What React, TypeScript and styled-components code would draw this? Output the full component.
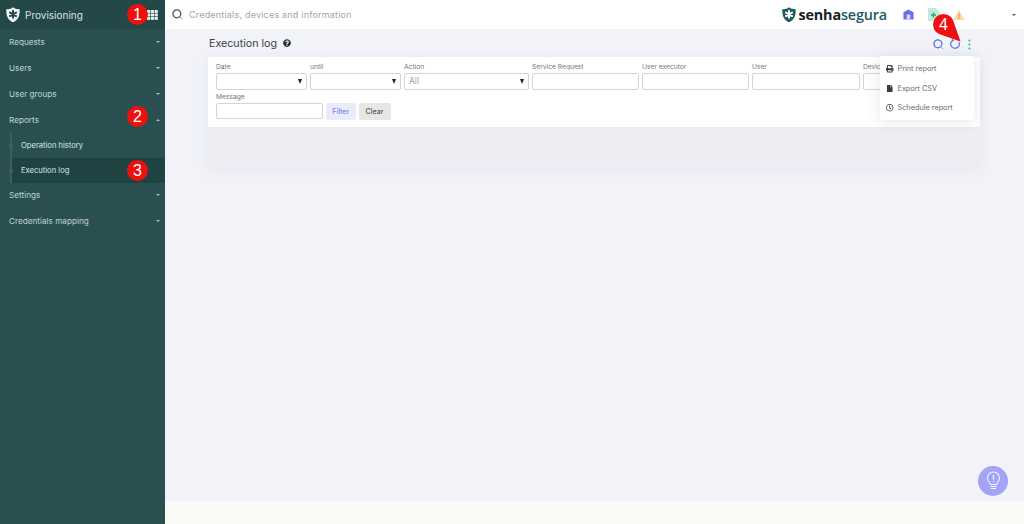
import React from "react";
import styled, { createGlobalStyle } from "styled-components";
import { FaPrint, FaFile, FaRegClock, FaQuestionCircle } from "react-icons/fa";

const Global = createGlobalStyle`
  html, body { margin: 0; padding: 0; height: 100%; overflow: hidden; }
  body { font-family: "Inter", "Open Sans", sans-serif; background: #f1f3f9; }
  #root { height: 524px; }
  * { box-sizing: border-box; }
`;

const Page = styled.div`
  display: flex;
  width: 1024px;
  height: 524px;
  overflow: hidden;
`;
const Sidebar = styled.aside`
  position: relative;
  width: 165px;
  flex: none;
  background: #2a4f50;
`;
const Brand = styled.div`
  height: 29px;
  background: #244747;
  display: flex;
  align-items: center;
  padding-left: 6px;
  color: #d9e4e2;
  font-size: 10px;
  gap: 5px;
`;
const GridIcon = styled.svg`
  margin-left: auto;
  margin-right: 7px;
`;
const Nav = styled.nav`
  display: flex;
  flex-direction: column;
`;
const NavItem = styled.div`
  height: 26px;
  display: flex;
  align-items: center;
  justify-content: space-between;
  padding: 0 5px 0 9px;
  color: #bdd3d2;
  font-size: 8.2px;
`;
const Caret = styled.span<{ $up?: boolean }>`
  width: 0;
  height: 0;
  border-left: 2.5px solid transparent;
  border-right: 2.5px solid transparent;
  ${(p) => (p.$up ? "border-bottom: 2.5px solid #a9c2c1;" : "border-top: 2.5px solid #a9c2c1;")}
`;
const SubList = styled.div`
  position: relative;
  display: flex;
  flex-direction: column;
  margin-bottom: -1px;
  &::before {
    content: "";
    position: absolute;
    left: 10px;
    top: 0;
    bottom: 0;
    width: 1.5px;
    background: #3c5e60;
  }
`;
const SubItem = styled.div<{ $active?: boolean }>`
  position: relative;
  height: 25px;
  display: flex;
  align-items: center;
  padding-left: 21px;
  color: #dbe6e4;
  font-size: 7.6px;
  background: ${(p) => (p.$active ? "linear-gradient(90deg, transparent 12px, #1f4343 12px)" : "transparent")};
  &::before {
    content: "";
    position: absolute;
    left: 9px;
    top: 10.5px;
    width: 4px;
    height: 4px;
    background: #46586a;
  }
`;
const Marker = styled.span<{ $x: number; $y: number }>`
  position: absolute;
  left: ${(p) => p.$x}px;
  top: ${(p) => p.$y}px;
  width: 21px;
  height: 21px;
  border-radius: 50%;
  background: #ee0f0f;
  color: #fff;
  font-family: "Liberation Sans", sans-serif;
  font-size: 16px;
  display: flex;
  align-items: center;
  justify-content: center;
  z-index: 5;
`;
const Tail = styled.svg`
  position: absolute;
  left: 0;
  top: 0;
  z-index: -1;
  overflow: visible;
`;
const Content = styled.div`
  flex: 1;
  display: flex;
  flex-direction: column;
  min-width: 0;
  position: relative;
`;
const TopBar = styled.header`
  height: 29px;
  background: #fff;
  display: flex;
  align-items: center;
  padding-left: 7px;
  flex: none;
`;
const SearchText = styled.span`
  margin-left: 6px;
  font-size: 9px;
  color: #a8a4a0;
  letter-spacing: 0.2px;
`;
const Logo = styled.div`
  margin-left: auto;
  display: flex;
  align-items: center;
  gap: 2px;
`;
const Wordmark = styled.span`
  font-family: "Open Sans", sans-serif;
  font-size: 14.4px;
  font-weight: 700;
  color: #15201f;
  letter-spacing: -0.15px;
  white-space: nowrap;
`;
const WordmarkTail = styled.span`
  color: #1e5a5e;
  font-weight: 600;
`;
const HeadIcons = styled.div`
  display: flex;
  align-items: center;
  margin-left: 16px;
  width: 62px;
`;
const IconSlot = styled.span`
  display: flex;
  width: 25px;
`;
const UserCaret = styled.span`
  margin: 0 8px 0 47px;
  width: 0;
  height: 0;
  border-left: 2.5px solid transparent;
  border-right: 2.5px solid transparent;
  border-top: 2.5px solid #555;
`;
const Main = styled.main`
  flex: 1;
  padding: 0 44px 0 43px;
  position: relative;
  min-height: 0;
`;
const TitleRow = styled.div`
  height: 28px;
  display: flex;
  align-items: center;
  gap: 6px;
  padding-left: 1px;
  color: #3b3f47;
  font-size: 10.7px;
  svg { color: #2b2f36; }
`;
const Actions = styled.div`
  margin-left: auto;
  display: flex;
  align-items: center;
  gap: 7px;
  margin-right: 9px;
  margin-top: 2px;
`;
const RefreshIcon = styled.svg`
  margin: 0 1px 0 -1px;
`;
const Panel = styled.section`
  box-shadow: 0 2px 12px rgba(60, 60, 90, 0.06);
`;
const FilterBox = styled.div`
  height: 70px;
  background: #fff;
  padding: 5px 8px 0;
  overflow: hidden;
`;
const FilterRow = styled.div`
  display: flex;
  gap: 3px;
  margin-bottom: 2px;
  align-items: flex-end;
`;
const Field = styled.label<{ $w: number }>`
  width: ${(p) => p.$w}px;
  flex: none;
  display: flex;
  flex-direction: column;
  gap: 1px;
  color: #77787c;
  font-size: 6.7px;
  line-height: 10px;
`;
const Box = styled.div`
  height: 16.5px;
  border: 1px solid #d4d4d4;
  border-radius: 2px;
  background: #fff;
  display: flex;
  align-items: center;
  padding: 0 4px;
  color: #a2a2a2;
  font-size: 8.5px;
`;
const Arrow = styled.span`
  margin-left: auto;
  width: 0;
  height: 0;
  border-left: 2.5px solid transparent;
  border-right: 2.5px solid transparent;
  border-top: 5px solid #222;
`;
const Btn = styled.button<{ $bg: string; $fg: string; $w: number }>`
  height: 17px;
  width: ${(p) => p.$w}px;
  margin-bottom: -0.5px;
  border: 1px solid ${(p) => p.$bg};
  border-radius: 2px;
  background: ${(p) => p.$bg};
  color: ${(p) => p.$fg};
  font-family: inherit;
  font-size: 7px;
  font-weight: 500;
  padding: 0;
`;
const PanelFoot = styled.div`
  height: 41px;
  background: #ededf3;
`;
const Menu = styled.div`
  position: absolute;
  left: 715px;
  top: 27px;
  width: 94px;
  height: 64px;
  background: #fff;
  border-radius: 2px;
  box-shadow: 0 2px 14px rgba(60, 60, 80, 0.12);
  display: flex;
  flex-direction: column;
  padding: 3px 0 0 6px;
  z-index: 3;
`;
const MenuItem = styled.div`
  height: 19.5px;
  display: flex;
  align-items: center;
  gap: 4px;
  color: #6a6a70;
  font-size: 7.3px;
  svg { color: #3a3a3f; flex: none; }
`;
const Footer = styled.footer`
  height: 23px;
  flex: none;
  background: #f9f9f6;
`;
const Help = styled.div`
  position: absolute;
  right: 16px;
  bottom: 5px;
  width: 30px;
  height: 30px;
  border-radius: 50%;
  background: #a3a3f7;
  display: flex;
  align-items: center;
  justify-content: center;
`;

const Shield = ({ w, fill, star }: { w: number; fill: string; star: string }) => (
  <svg width={w} height={w * 1.12} viewBox="0 0 20 22.4">
    <path d="M10 0.5 C12 2.5 15 3.4 19.5 3.2 C20 12 17.5 18.5 10 22 C2.5 18.5 0 12 0.5 3.2 C5 3.4 8 2.5 10 0.5Z" fill={fill} />
    <path d="M10 5.5V15.5M5.6 8L14.4 13M14.4 8L5.6 13" stroke={star} strokeWidth="2.8" strokeLinecap="round" />
  </svg>
);

const Search = ({ color, size }: { color: string; size: number }) => (
  <svg width={size} height={size} viewBox="0 0 12 12" fill="none" stroke={color}>
    <circle cx="5.3" cy="5.3" r="4.3" strokeWidth="1.4" />
    <path d="M8.6 8.6L11.3 11.3" strokeWidth="1" opacity="0.6" />
  </svg>
);

const menuLabels = ["Requests", "Users", "User groups"];
const row1: [string, number, boolean, string?][] = [
  ["Date", 91, true],
  ["until", 91, true],
  ["Action", 125, true, "All"],
  ["Service Request", 107, false],
  ["User executor", 107, false],
  ["User", 108, false],
  ["Device", 100, false],
];

export default function App() {
  return (
    <Page>
      <Global />
      <Sidebar>
        <Brand>
          <Shield w={14} fill="#f2f6f5" star="#244747" />
          Provisioning
          <GridIcon width="11" height="10" viewBox="0 0 11 10" fill="#e8efee">
            {[0, 3.8, 7.6].map((x) =>
              [0, 3.5, 7].map((y) => <rect key={`${x}-${y}`} x={x} y={y} width="3.2" height="2.9" />)
            )}
          </GridIcon>
        </Brand>
        <Nav>
          {menuLabels.map((l) => (
            <NavItem key={l}>
              {l}
              <Caret />
            </NavItem>
          ))}
          <NavItem>
            Reports
            <Caret $up />
          </NavItem>
          <SubList>
            <SubItem>Operation history</SubItem>
            <SubItem $active>Execution log</SubItem>
          </SubList>
          <NavItem>
            Settings
            <Caret />
          </NavItem>
          <NavItem>
            Credentials mapping
            <Caret />
          </NavItem>
        </Nav>
        <Marker $x={127} $y={4}>1</Marker>
        <Marker $x={127} $y={106}>2</Marker>
        <Marker $x={127} $y={160}>3</Marker>
      </Sidebar>
      <Content>
        <TopBar>
          <Search color="#4a5170" size={11} />
          <SearchText>Credentials, devices and information</SearchText>
          <Logo>
            <Shield w={14} fill="#1e5a5e" star="#ffffff" />
            <Wordmark>senha<WordmarkTail>segura</WordmarkTail></Wordmark>
          </Logo>
          <HeadIcons>
            <IconSlot>
              <svg width="11" height="11" viewBox="0 0 12 12">
                <path d="M6 0.5L11.5 3.5V11.5H0.5V3.5Z" fill="#6c6cf0" />
                <rect x="4" y="6" width="4" height="5.5" fill="#d9d9fb" />
              </svg>
            </IconSlot>
            <IconSlot>
              <svg width="12" height="13" viewBox="0 0 12 13">
                <path d="M0 0H8L12 4V13H0Z" fill="#c3ead9" />
                <path d="M5.5 4.5V9.5M3 7H8" stroke="#2aa877" strokeWidth="1.4" />
              </svg>
            </IconSlot>
            <svg width="12" height="10" viewBox="0 0 12 11">
              <path d="M6 0L12 11H0Z" fill="#fbd8a6" />
              <path d="M6 3.5V7.5M6 8.5V9.8" stroke="#e8852c" strokeWidth="1.1" />
            </svg>
          </HeadIcons>
          <UserCaret />
        </TopBar>
        <Main>
          <TitleRow>
            Execution log
            <FaQuestionCircle size={8} />
            <Actions>
              <Search color="#5d6df2" size={11} />
              <RefreshIcon width="10" height="10" viewBox="0 0 10 10" fill="none" stroke="#5c6ef0" strokeWidth="1.3">
                <path d="M3.2 1A4.3 4.3 0 1 0 9 3.2" />
                <path d="M1.8 0.2L3.4 1L2.6 2.6" strokeWidth="0.9" />
              </RefreshIcon>
              <svg width="3" height="11" viewBox="0 0 3 11" fill="#2fc79a">
                <circle cx="1.5" cy="1.5" r="1.1" />
                <circle cx="1.5" cy="5.5" r="1.1" />
                <circle cx="1.5" cy="9.5" r="1.1" />
              </svg>
            </Actions>
          </TitleRow>
          <Panel>
            <FilterBox>
              <FilterRow>
                {row1.map(([label, w, sel, val]) => (
                  <Field key={label} $w={w}>
                    {label}
                    <Box>
                      {val ?? ""}
                      {sel && <Arrow />}
                    </Box>
                  </Field>
                ))}
              </FilterRow>
              <FilterRow>
                <Field $w={107}>
                  Message
                  <Box />
                </Field>
                <Btn $bg="#eaecfc" $fg="#7d85ea" $w={29.5}>Filter</Btn>
                <Btn $bg="#e6e6e6" $fg="#555" $w={32}>Clear</Btn>
              </FilterRow>
            </FilterBox>
            <PanelFoot />
          </Panel>
          <Menu>
            <MenuItem><FaPrint size={7.5} />Print report</MenuItem>
            <MenuItem><FaFile size={7.5} />Export CSV</MenuItem>
            <MenuItem><FaRegClock size={7.5} />Schedule report</MenuItem>
          </Menu>
          <Marker $x={768} $y={-15}>
            <Tail width="21" height="21" viewBox="0 0 21 21">
              <polygon points="20.5,7.5 7.5,20.5 27.5,27.5" fill="#ee0f0f" />
            </Tail>
            4
          </Marker>
          <Help>
            <svg width="17" height="20" viewBox="0 0 17 20" fill="none" stroke="#f2f2ff" strokeWidth="1.1">
              <path d="M5.5 13.5C5.3 11.5 2.5 10.5 2.5 7A6 6 0 0 1 14.5 7C14.5 10.5 11.7 11.5 11.5 13.5Z" />
              <path d="M5.5 15.5H11.5M6 17.5H11" />
              <path d="M8.5 4V8.5M8.5 10V11" strokeWidth="1.3" />
            </svg>
          </Help>
        </Main>
        <Footer />
      </Content>
    </Page>
  );
}
